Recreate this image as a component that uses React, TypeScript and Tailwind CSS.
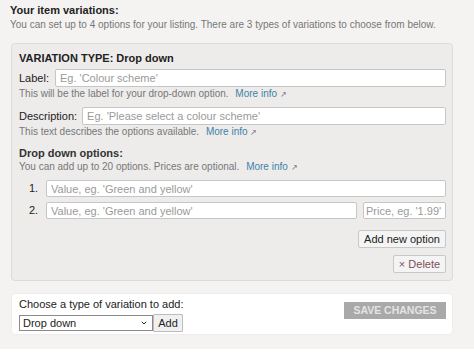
import { ChevronDown } from 'lucide-react';

function MoreInfo() {
  return (
    <span className="ml-[4px] text-[#3d82a8]">
      More info <span className="text-[8px] text-[#777]">↗</span>
    </span>
  );
}

const input =
  'border border-[#c6c6c6] rounded-[2px] bg-white px-[4px] text-[11px] text-[#333] placeholder:text-[#9a9a9a] outline-none min-w-0';

const help = 'text-[10px] leading-[13px] text-[#777]';

export default function App() {
  return (
    <div className="w-[474px] h-[353px] bg-white font-['Liberation_Sans',Arial,sans-serif] text-[#222]">
      <div className="h-[349px] w-[474px] bg-[#f4f3f2] pl-[11px] pr-[21px] pt-[3px]">
        <h2 className="text-[11px] font-bold leading-[14px] -ml-[1px]">Your item variations:</h2>
        <p className={`${help} mt-[1px] -ml-[1px]`}>
          You can set up to 4 options for your listing. There are 3 types of variations to choose from below.
        </p>

        <div className="mt-[12px] border border-[#dcdbda] rounded-[4px] bg-[#edeceb] pl-[7px] pr-[6px] pt-[7px] pb-[7px]">
          <h3 className="text-[11px] font-bold leading-[14px]">VARIATION TYPE: Drop down</h3>

          <div className="mt-[4px] flex items-center gap-[6px]">
            <span className="text-[11px]">Label:</span>
            <input className={`${input} flex-1 h-[18px]`} placeholder="Eg. 'Colour scheme'" />
          </div>
          <p className={help}>
            This will be the label for your drop-down option. <MoreInfo />
          </p>

          <div className="mt-[6px] flex items-center gap-[5px]">
            <span className="text-[11px]">Description:</span>
            <input className={`${input} flex-1 h-[18px]`} placeholder="Eg. 'Please select a colour scheme'" />
          </div>
          <p className={help}>
            This text describes the options available. <MoreInfo />
          </p>

          <h4 className="mt-[7px] text-[11px] font-bold leading-[14px] text-[#333]">Drop down options:</h4>
          <p className={help}>
            You can add up to 20 options. Prices are optional. <MoreInfo />
          </p>

          <div className="mt-[6px] flex items-center pl-[10px] gap-[7px]">
            <span className="text-[11px] w-[10px]">1.</span>
            <input className={`${input} flex-1 h-[17px]`} placeholder="Value, eg. 'Green and yellow'" />
          </div>
          <div className="mt-[5px] flex items-center pl-[10px] gap-[7px]">
            <span className="text-[11px] w-[10px]">2.</span>
            <input className={`${input} flex-1 h-[17px]`} placeholder="Value, eg. 'Green and yellow'" />
            <input
              className="w-[83px] h-[17px] -ml-[1px] border border-[#c6c6c6] rounded-[2px] bg-white px-[2px] text-[11px] text-[#333] placeholder:text-[#9a9a9a] outline-none"
              placeholder="Price, eg. '1.99'"
            />
          </div>

          <div className="mt-[11px] flex justify-end">
            <button className="h-[18px] w-[88px] border border-[#c8c8c8] rounded-[2px] bg-[#f4f4f4] text-[11px] text-[#222] leading-none">
              Add new option
            </button>
          </div>
          <div className="mt-[7px] flex justify-end">
            <button className="h-[18px] w-[53px] border border-[#c8c8c8] rounded-[2px] bg-[#f4f4f4] text-[11px] text-[#7f4f58] leading-none">
              × Delete
            </button>
          </div>
        </div>

        <div className="mt-[12px] h-[42px] rounded-[4px] border border-[#ededed] bg-white flex items-center justify-between pl-[7px] pr-[6px]">
          <div className="flex flex-col pt-[1px]">
            <span className="text-[11px] leading-[14px] text-[#222]">Choose a type of variation to add:</span>
            <div className="flex items-center mt-[3px]">
              <div className="relative w-[134px] h-[16px] border border-[#8a8a8a] bg-white flex items-center pl-[3px] text-[11px] text-[#222]">
                Drop down
                <ChevronDown className="absolute right-[4px] top-[3px] w-[8px] h-[8px]" strokeWidth={3} />
              </div>
              <button className="h-[18px] w-[30px] border border-[#bdbdbd] rounded-[1px] bg-[#f0f0f0] text-[11px] text-[#222]">
                Add
              </button>
            </div>
          </div>
          <button className="h-[17px] w-[102px] mb-[7px] bg-[#a9a9a9] text-[10.5px] font-bold text-[#e4e4e4]">
            SAVE CHANGES
          </button>
        </div>
      </div>
    </div>
  );
}
